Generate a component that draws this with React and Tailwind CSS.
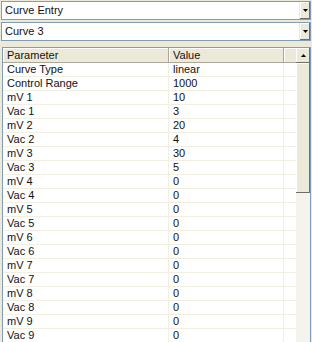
import React from "react";

const rows = [
  ["Curve Type", "linear"],
  ["Control Range", "1000"],
  ["mV 1", "10"],
  ["Vac 1", "3"],
  ["mV 2", "20"],
  ["Vac 2", "4"],
  ["mV 3", "30"],
  ["Vac 3", "5"],
  ["mV 4", "0"],
  ["Vac 4", "0"],
  ["mV 5", "0"],
  ["Vac 5", "0"],
  ["mV 6", "0"],
  ["Vac 6", "0"],
  ["mV 7", "0"],
  ["Vac 7", "0"],
  ["mV 8", "0"],
  ["Vac 8", "0"],
  ["mV 9", "0"],
  ["Vac 9", "0"],
];

function Combo({ label }) {
  return (
    <div className="flex h-[19px] border border-[#7f9db9] bg-white">
      <div className="flex-1 px-[3px] leading-[17px]">{label}</div>
      <div className="flex w-[11px] items-center justify-center border-l border-[#ece9d8] bg-[#ece9d8] shadow-[inset_-1px_-1px_0_#716f64,inset_1px_1px_0_#fff]">
        <svg width="5" height="3" viewBox="0 0 5 3">
          <path d="M0 0h5L2.5 3z" fill="#000" />
        </svg>
      </div>
    </div>
  );
}

export default function App() {
  return (
    <div
      className="h-[342px] w-[312px] overflow-hidden bg-[#ece9d8] px-[1px] pt-[1px] text-[11px] text-[#111]"
      style={{ fontFamily: '"Liberation Sans", Arial, sans-serif' }}
    >
      <div className="flex flex-col gap-[2px]">
        <Combo label="Curve Entry" />
        <Combo label="Curve 3" />
      </div>

      {/* List view */}
      <div className="mt-[6px] ml-[1px] flex h-[300px] border-t border-l border-r border-[#7f9db9] bg-white">
        <div className="flex-1 overflow-hidden">
          <div className="flex h-[15px] bg-[#ece9d8] leading-[14px]">
            <div className="w-[166px] border-r border-b border-[#aca899] pl-[4px] shadow-[inset_1px_1px_0_#fff]">Parameter</div>
            <div className="w-[115px] border-r border-b border-[#aca899] pl-[4px] shadow-[inset_1px_1px_0_#fff]">Value</div>
            <div className="flex-1 border-b border-[#aca899] shadow-[inset_1px_1px_0_#fff]"></div>
          </div>
          {rows.map(([p, v]) => (
            <div key={p} className="flex h-[14px] border-b border-[#f1efe2] leading-[13px]">
              <div className="w-[166px] border-r border-[#f1efe2] pl-[4px]">{p}</div>
              <div className="w-[115px] border-r border-[#f1efe2] pl-[4px]">{v}</div>
              <div className="flex-1"></div>
            </div>
          ))}
        </div>
        {/* Scrollbar */}
        <div className="flex w-[14px] flex-col bg-[#f4f3ee]">
          <div className="flex h-[15px] items-center justify-center bg-[#ece9d8] shadow-[inset_-1px_-1px_0_#716f64,inset_1px_1px_0_#fff]">
            <svg width="5" height="3" viewBox="0 0 5 3">
              <path d="M0 3h5L2.5 0z" fill="#000" />
            </svg>
          </div>
          <div className="h-[130px] bg-[#ece9d8] shadow-[inset_-1px_-1px_0_#716f64,inset_1px_1px_0_#fff]"></div>
          <div className="flex-1"></div>
        </div>
      </div>
    </div>
  );
}
